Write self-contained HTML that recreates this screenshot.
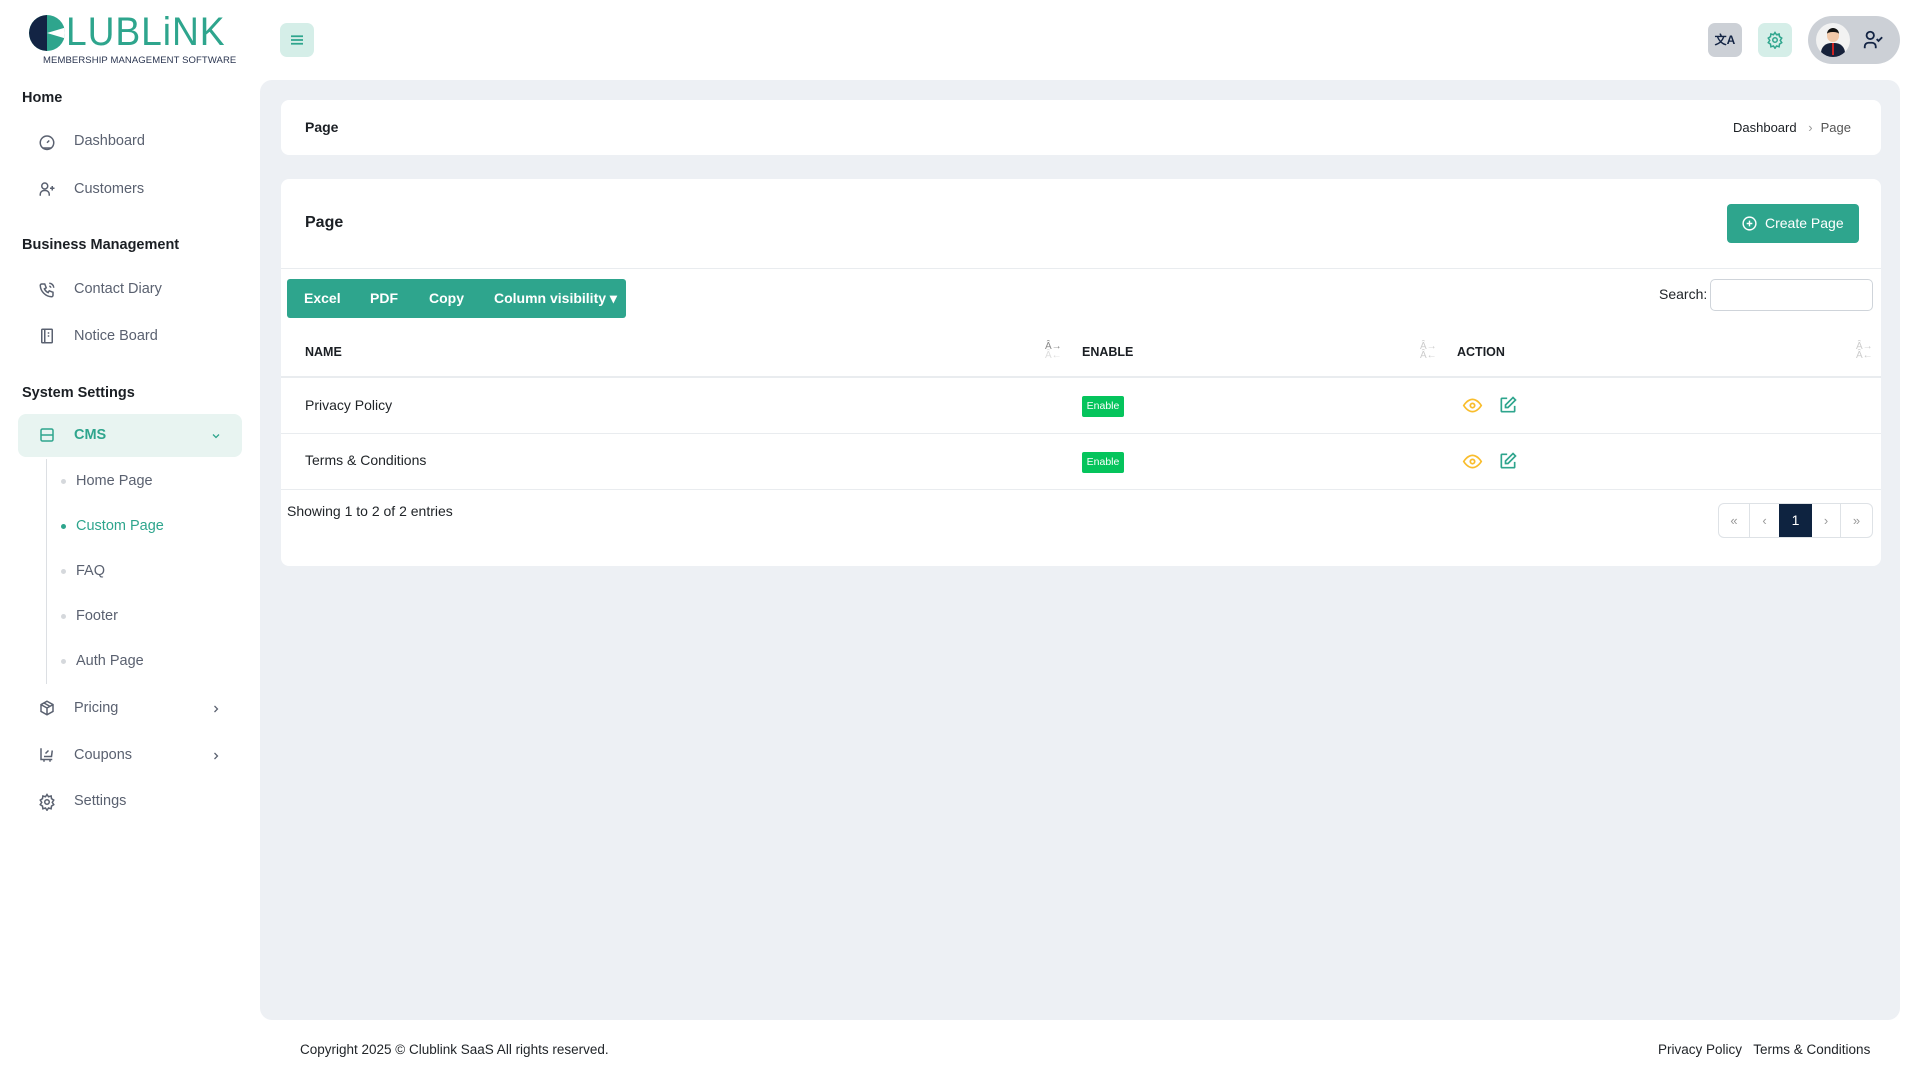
<!DOCTYPE html>
<html><head><meta charset="utf-8"><style>
*{box-sizing:border-box;margin:0;padding:0}
body{width:1920px;height:1080px;background:#fff;font-family:"Liberation Sans",Arial,sans-serif;color:#212529;position:relative;overflow:hidden}
.a{position:absolute}
.h{font-size:14.5px;font-weight:bold;color:#1b1f24;left:22px}
.mi{left:74px;font-size:14.5px;color:#5a6170}
.ic{left:38px;width:18px;height:18px}
.sub{left:76px;font-size:14.5px;color:#5a6170}
.dot{left:61px;width:5px;height:5px;border-radius:50%;background:#d5d8dc}
.card{background:#fff;border-radius:8px}
.th{font-size:12.5px;font-weight:bold;color:#1b1f24}
.line{left:281px;width:1600px;height:1px;background:#e9ecef}
.badge{width:42px;height:21px;background:#05c45c;color:#fff;font-size:10.5px;border-radius:2px;text-align:center;line-height:21px}
.sort{font-size:10px;color:#ccc;line-height:9px}
</style></head><body>
<!-- logo -->
<div class="a" style="left:29px;top:15px;width:36px;height:36px;border-radius:50%;background:#2ea58d;overflow:hidden">
<div style="position:absolute;left:0;top:0;width:18px;height:36px;background:#132444;border-radius:18px 0 0 18px"></div>
<div style="position:absolute;left:18px;top:12px;width:20px;height:12px;background:#fff;clip-path:polygon(0 50%,100% 0,100% 100%)"></div>
</div>
<div class="a" style="left:66px;top:10px;font-size:40px;color:#2ea58d;letter-spacing:1px;line-height:44px;transform:scaleX(0.93);transform-origin:left">LUBLiNK</div>
<div class="a" style="left:43px;top:55px;font-size:9.5px;color:#2a3550;letter-spacing:0.1px">MEMBERSHIP MANAGEMENT SOFTWARE</div>

<!-- sidebar -->
<div class="a h" style="top:90px">Home</div>
<svg class="a ic" style="top:133px" viewBox="0 0 24 24" fill="none" stroke="#5a6170" stroke-width="2"><circle cx="12" cy="13" r="9"/><path d="M12 13l3-3"/><path d="M6 20h12"/></svg>
<div class="a mi" style="top:133px">Dashboard</div>
<svg class="a ic" style="top:180px" viewBox="0 0 24 24" fill="none" stroke="#5a6170" stroke-width="2"><circle cx="9" cy="8" r="4"/><path d="M3 21v-2a5 5 0 015-5h2a5 5 0 015 5v2M19 8v6M16 11h6"/></svg>
<div class="a mi" style="top:181px">Customers</div>
<div class="a h" style="top:237px">Business Management</div>
<svg class="a ic" style="top:281px" viewBox="0 0 24 24" fill="none" stroke="#5a6170" stroke-width="2"><path d="M5 4h4l2 5-2.5 1.5a11 11 0 005 5L15 13l5 2v4a2 2 0 01-2 2A16 16 0 013 6a2 2 0 012-2M15 3a6 6 0 016 6M15 7a2 2 0 012 2"/></svg>
<div class="a mi" style="top:281px">Contact Diary</div>
<svg class="a ic" style="top:327px" viewBox="0 0 24 24" fill="none" stroke="#5a6170" stroke-width="2"><rect x="5" y="3" width="14" height="18" rx="1"/><path d="M9 3v18M13 8h2M13 12h2"/></svg>
<div class="a mi" style="top:328px">Notice Board</div>
<div class="a h" style="top:385px">System Settings</div>
<div class="a" style="left:18px;top:414px;width:224px;height:43px;background:#e8f4f1;border-radius:8px"></div>
<svg class="a ic" style="top:426px" viewBox="0 0 24 24" fill="none" stroke="#2ea58d" stroke-width="2"><rect x="4" y="4" width="16" height="16" rx="2"/><path d="M4 12h16"/></svg>
<div class="a mi" style="top:427px;color:#2ea58d;font-weight:bold">CMS</div>
<svg class="a" style="left:210px;top:430px;width:12px;height:12px" viewBox="0 0 24 24" fill="none" stroke="#2ea58d" stroke-width="2.5"><path d="M6 9l6 6 6-6"/></svg>
<div class="a" style="left:46px;top:459px;width:1px;height:225px;background:#dcdfe3"></div>
<div class="a dot" style="top:479px"></div><div class="a sub" style="top:473px">Home Page</div>
<div class="a dot" style="top:524px;background:#2ea58d"></div><div class="a sub" style="top:518px;color:#2ea58d">Custom Page</div>
<div class="a dot" style="top:569px"></div><div class="a sub" style="top:563px">FAQ</div>
<div class="a dot" style="top:614px"></div><div class="a sub" style="top:608px">Footer</div>
<div class="a dot" style="top:659px"></div><div class="a sub" style="top:653px">Auth Page</div>
<svg class="a ic" style="top:699px" viewBox="0 0 24 24" fill="none" stroke="#5a6170" stroke-width="2"><path d="M12 3l8 4.5v9L12 21l-8-4.5v-9zM12 12l8-4.5M12 12v9M12 12L4 7.5M8 5.3l8 4.5"/></svg>
<div class="a mi" style="top:700px">Pricing</div>
<svg class="a" style="left:210px;top:703px;width:12px;height:12px" viewBox="0 0 24 24" fill="none" stroke="#5a6170" stroke-width="2.5"><path d="M9 6l6 6-6 6"/></svg>
<svg class="a ic" style="top:746px" viewBox="0 0 24 24" fill="none" stroke="#5a6170" stroke-width="2"><path d="M4 3v15h15M8 18v3M16 18v3M8 14h10l1-8M10 10l4-4M10 6h.01M14 10h.01"/></svg>
<div class="a mi" style="top:747px">Coupons</div>
<svg class="a" style="left:210px;top:750px;width:12px;height:12px" viewBox="0 0 24 24" fill="none" stroke="#5a6170" stroke-width="2.5"><path d="M9 6l6 6-6 6"/></svg>
<svg class="a ic" style="top:793px" viewBox="0 0 24 24" fill="none" stroke="#5a6170" stroke-width="2"><circle cx="12" cy="12" r="3"/><path d="M12 2l2 3 3.5-1 .5 3.5 3 2-2 3 2 3-3 2-.5 3.5-3.5-1-2 3-2-3-3.5 1-.5-3.5-3-2 2-3-2-3 3-2 .5-3.5 3.5 1z"/></svg>
<div class="a mi" style="top:793px">Settings</div>

<!-- top bar -->
<div class="a" style="left:280px;top:23px;width:34px;height:34px;background:#d5eee8;border-radius:7px"></div>
<svg class="a" style="left:288px;top:31px;width:18px;height:18px" viewBox="0 0 24 24" fill="none" stroke="#2ea58d" stroke-width="2.2"><path d="M4 7h16M4 12h16M4 17h16"/></svg>
<div class="a" style="left:1708px;top:23px;width:34px;height:34px;background:#ccd0d6;border-radius:7px;font-size:12px;font-weight:bold;color:#132444;text-align:center;line-height:34px">文A</div>
<div class="a" style="left:1758px;top:23px;width:34px;height:34px;background:#d5eee8;border-radius:7px"></div>
<svg class="a" style="left:1766px;top:31px;width:18px;height:18px" viewBox="0 0 24 24" fill="none" stroke="#2ea58d" stroke-width="2"><circle cx="12" cy="12" r="3"/><path d="M12 2l2 3 3.5-1 .5 3.5 3 2-2 3 2 3-3 2-.5 3.5-3.5-1-2 3-2-3-3.5 1-.5-3.5-3-2 2-3-2-3 3-2 .5-3.5 3.5 1z"/></svg>
<div class="a" style="left:1808px;top:16px;width:92px;height:48px;background:#ccd0d6;border-radius:24px"></div>
<div class="a" style="left:1816px;top:23px;width:34px;height:34px;border-radius:50%;background:#f2f2f2;overflow:hidden">
<div style="position:absolute;left:11px;top:5px;width:12px;height:14px;border-radius:6px;background:#f1c8a8;border-top:4px solid #111"></div>
<div style="position:absolute;left:5px;top:20px;width:24px;height:16px;border-radius:10px 10px 0 0;background:#16213a"></div>
<div style="position:absolute;left:16px;top:20px;width:2px;height:12px;background:#c22"></div>
</div>
<svg class="a" style="left:1862px;top:29px;width:22px;height:22px" viewBox="0 0 24 24" fill="none" stroke="#132444" stroke-width="2"><circle cx="9" cy="7" r="4"/><path d="M3 21v-2a4 4 0 014-4h4a4 4 0 014 4v2M16 11l2 2 4-4"/></svg>

<!-- main -->
<div class="a" style="left:260px;top:80px;width:1640px;height:940px;background:#edf0f4;border-radius:12px"></div>
<div class="a card" style="left:281px;top:100px;width:1600px;height:55px"></div>
<div class="a" style="left:305px;top:119px;font-size:14px;font-weight:bold;color:#1b1f24">Page</div>
<div class="a" style="left:1733px;top:120px;font-size:13px;color:#1b1f24">Dashboard <span style="color:#999;margin:0 8px">›</span><span style="color:#555">Page</span></div>

<div class="a card" style="left:281px;top:179px;width:1600px;height:387px"></div>
<div class="a" style="left:305px;top:214px;font-size:16px;font-weight:bold;color:#1b1f24">Page</div>
<div class="a" style="left:1727px;top:204px;width:132px;height:39px;background:#2ea58d;border-radius:4px;color:#fff;font-size:14px;line-height:39px;padding-left:38px">Create Page</div>
<svg class="a" style="left:1741px;top:215px;width:17px;height:17px" viewBox="0 0 24 24" fill="none" stroke="#fff" stroke-width="2"><circle cx="12" cy="12" r="9"/><path d="M12 8v8M8 12h8"/></svg>
<div class="a line" style="top:268px"></div>
<div class="a" style="left:287px;top:279px;width:339px;height:39px;background:#2ea58d;border-radius:3px;color:#fff;font-size:14px;font-weight:bold;line-height:39px">
<span class="a" style="left:17px">Excel</span><span class="a" style="left:83px">PDF</span><span class="a" style="left:142px">Copy</span><span class="a" style="left:207px">Column visibility ▾</span></div>
<div class="a" style="left:1659px;top:286px;font-size:14px;color:#212529">Search:</div>
<div class="a" style="left:1710px;top:279px;width:163px;height:32px;border:1px solid #cfd4da;border-radius:5px"></div>

<div class="a th" style="left:305px;top:345px">NAME</div>
<div class="a th" style="left:1082px;top:345px">ENABLE</div>
<div class="a th" style="left:1457px;top:345px">ACTION</div>
<div class="a sort" style="left:1045px;top:342px;color:#888">Â→<br><span style="color:#ddd">Â←</span></div>
<div class="a sort" style="left:1420px;top:342px">Â→<br>Â←</div>
<div class="a sort" style="left:1856px;top:342px">Â→<br>Â←</div>
<div class="a" style="left:281px;top:376px;width:1600px;height:2px;background:#e9ecef"></div>
<div class="a" style="left:305px;top:397px;font-size:14px">Privacy Policy</div>
<div class="a badge" style="left:1082px;top:396px">Enable</div>
<div class="a line" style="top:433px"></div>
<div class="a" style="left:305px;top:452px;font-size:14px">Terms &amp; Conditions</div>
<div class="a badge" style="left:1082px;top:452px">Enable</div>
<div class="a line" style="top:489px"></div>
<svg class="a" style="left:1462px;top:395px;width:21px;height:21px" viewBox="0 0 24 24" fill="none" stroke="#f9bd2c" stroke-width="2"><path d="M2 12s4-7 10-7 10 7 10 7-4 7-10 7S2 12 2 12z"/><circle cx="12" cy="12" r="2.5"/></svg>
<svg class="a" style="left:1498px;top:395px;width:20px;height:20px" viewBox="0 0 24 24" fill="none" stroke="#2ea58d" stroke-width="2"><path d="M11 4H5a1 1 0 00-1 1v14a1 1 0 001 1h14a1 1 0 001-1v-6"/><path d="M18 3l3 3-9 9H9v-3z"/></svg>
<svg class="a" style="left:1462px;top:451px;width:21px;height:21px" viewBox="0 0 24 24" fill="none" stroke="#f9bd2c" stroke-width="2"><path d="M2 12s4-7 10-7 10 7 10 7-4 7-10 7S2 12 2 12z"/><circle cx="12" cy="12" r="2.5"/></svg>
<svg class="a" style="left:1498px;top:451px;width:20px;height:20px" viewBox="0 0 24 24" fill="none" stroke="#2ea58d" stroke-width="2"><path d="M11 4H5a1 1 0 00-1 1v14a1 1 0 001 1h14a1 1 0 001-1v-6"/><path d="M18 3l3 3-9 9H9v-3z"/></svg>

<div class="a" style="left:287px;top:503px;font-size:14px">Showing 1 to 2 of 2 entries</div>
<div class="a" style="left:1718px;top:503px;width:155px;height:35px;border:1px solid #dee2e6;border-radius:6px;overflow:hidden;font-size:13px;color:#999;display:flex">
<div style="width:31px;text-align:center;line-height:33px;border-right:1px solid #dee2e6">«</div>
<div style="width:29px;text-align:center;line-height:33px">‹</div>
<div style="width:33px;text-align:center;line-height:33px;background:#0e2340;color:#fff;font-size:14px">1</div>
<div style="width:29px;text-align:center;line-height:33px;border-right:1px solid #dee2e6">›</div>
<div style="width:31px;text-align:center;line-height:33px">»</div>
</div>

<div class="a" style="left:300px;top:1042px;font-size:13.5px;color:#212529">Copyright 2025 © Clublink SaaS All rights reserved.</div>
<div class="a" style="left:1658px;top:1042px;font-size:13.5px;color:#212529">Privacy Policy&nbsp;&nbsp;&nbsp;Terms &amp; Conditions</div>
</body></html>
